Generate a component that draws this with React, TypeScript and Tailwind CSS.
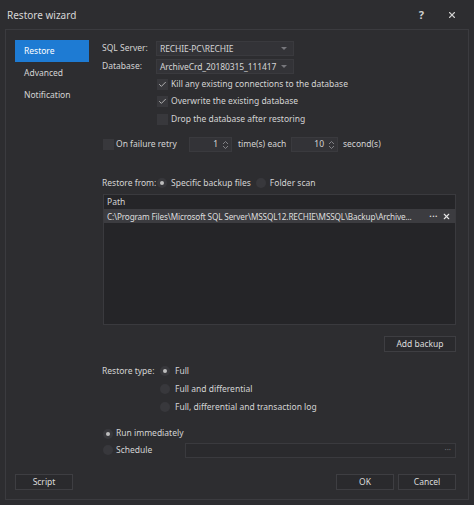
import { Check, X } from "lucide-react";

const font = { fontFamily: '"Noto Sans", "Segoe UI", sans-serif' };

const Select = ({ value }: { value: string }) => (
  <div className="w-[138px] h-[15px] bg-[#333337] border border-[#3a3a3e] flex items-center pl-[3px] pr-[6px]">
    <span className="flex-1 min-w-0 leading-[13px] tracking-[-0.1px]">{value}</span>
    <svg width="6" height="4" viewBox="0 0 6 4"><path d="M0 0h6L3 3z" fill="#77777c" /></svg>
  </div>
);

const Box = ({ checked }: { checked?: boolean }) => (
  <div className="w-[11px] h-[11px] bg-[#38383c] flex items-center justify-center shrink-0">
    {checked && <Check className="w-[9px] h-[9px] text-[#c8c8c8]" strokeWidth={2.2} />}
  </div>
);

const Radio = ({ on }: { on?: boolean }) => (
  <div className="w-[10px] h-[10px] rounded-full bg-[#38383c] flex items-center justify-center shrink-0">
    {on && <div className="w-[4px] h-[4px] rounded-full bg-[#bdbdbd]" />}
  </div>
);

const Spin = ({ value, w }: { value: string; w: string }) => (
  <div className={`${w} h-[15px] bg-[#333337] border border-[#3a3a3e] flex items-center justify-end pr-[3px] gap-[5px] shrink-0`}>
    <span>{value}</span>
    <div className="flex flex-col gap-[2px]">
      <svg width="5" height="3" viewBox="0 0 5 3"><path d="M0 3L2.5 0.5L5 3" fill="none" stroke="#8a8a8f" strokeWidth="0.9" /></svg>
      <svg width="5" height="3" viewBox="0 0 5 3"><path d="M0 0L2.5 2.5L5 0" fill="none" stroke="#8a8a8f" strokeWidth="0.9" /></svg>
    </div>
  </div>
);

const Button = ({ label, w }: { label: string; w: string }) => (
  <div className={`${w} h-[16px] bg-[#2a2a2d] border border-[#3e3e42] flex items-center justify-center text-[#dcdcdc] shrink-0`}>
    {label}
  </div>
);

export default function App() {
  return (
    <div className="w-[474px] h-[505px] bg-[#2d2d30] text-[#d4d4d4] text-[8.5px] leading-none whitespace-nowrap flex flex-col" style={font}>
      {/* title bar */}
      <div className="h-[29px] flex items-center pl-[7px] pr-[17px] shrink-0">
        <span className="flex-1 text-[10px] text-[#d6d6d6]">Restore wizard</span>
        <span className="text-[11px] font-bold text-[#d0d0d0] mr-[23px]">?</span>
        <X className="w-[10px] h-[10px] text-[#d0d0d0]" strokeWidth={2.6} />
      </div>

      <div className="mx-[5px] mb-[5px] flex-1 border border-[#3b3b3f] flex flex-col pt-[10px] pl-[9px] pr-[12px] pb-[9px] min-h-0">
        <div className="flex flex-1 min-w-0">
          {/* nav */}
          <div className="w-[74px] flex flex-col shrink-0">
            <div className="h-[22px] bg-[#1e7bd3] text-white flex items-center pl-[9px]">Restore</div>
            <div className="h-[22px] flex items-center pl-[9px]">Advanced</div>
            <div className="h-[22px] flex items-center pl-[9px]">Notification</div>
          </div>

          {/* form */}
          <div className="flex-1 min-w-0 ml-[13px] flex flex-col">
            <div className="mt-[1px] h-[15px] flex items-center">
              <span className="w-[54px]">SQL Server:</span>
              <Select value="RECHIE-PC\RECHIE" />
            </div>
            <div className="mt-[3px] h-[15px] flex items-center">
              <span className="w-[54px]">Database:</span>
              <Select value="ArchiveCrd_20180315_111417" />
            </div>
            <div className="mt-[2px] pl-[55px] flex flex-col">
              <div className="h-[17px] flex items-center gap-[3px]"><Box checked />Kill any existing connections to the database</div>
              <div className="h-[17px] flex items-center gap-[3px]"><Box checked />Overwrite the existing database</div>
              <div className="h-[18px] flex items-center gap-[3px]"><Box />Drop the database after restoring</div>
            </div>

            <div className="mt-[9px] h-[15px] flex items-center">
              <div className="w-[87px] flex items-center gap-[2px] pl-[1px]"><Box />On failure retry</div>
              <Spin value="1" w="w-[43px]" />
              <span className="ml-[6px] w-[53px]">time(s) each</span>
              <Spin value="10" w="w-[47px]" />
              <span className="ml-[5px]">second(s)</span>
            </div>

            <div className="mt-[24px] h-[14px] flex items-center">
              <span className="w-[55px]">Restore from:</span>
              <Radio on />
              <span className="ml-[4px]">Specific backup files</span>
              <div className="ml-[5px]"><Radio /></div>
              <span className="ml-[4px]">Folder scan</span>
            </div>

            <div className="mt-[4px] ml-[1px] h-[131px] bg-[#252528] border border-[#3a3a3e] flex flex-col min-w-0">
              <div className="h-[14px] flex items-center pl-[3px]">Path</div>
              <div className="h-[14px] bg-[#3c3c40] flex items-center pl-[3px] pr-[4px] text-[#dedede] min-w-0">
                <span className="flex-1 min-w-0 leading-[13px] text-[8.2px] tracking-[-0.15px]">C:\Program Files\Microsoft SQL Server\MSSQL12.RECHIE\MSSQL\Backup\Archive...</span>
                <span className="ml-[6px] font-bold tracking-[0.5px]">···</span>
                <X className="ml-[4px] w-[9px] h-[9px] text-[#e6e6e6] shrink-0" strokeWidth={3} />
              </div>
            </div>

            <div className="mt-[11px] flex justify-end">
              <Button label="Add backup" w="w-[72px]" />
            </div>

            <div className="mt-[10px] flex">
              <span className="w-[58px] h-[18px] flex items-center">Restore type:</span>
              <div className="flex flex-col">
                <div className="h-[18px] flex items-center gap-[5px]"><Radio on />Full</div>
                <div className="h-[18px] flex items-center gap-[5px]"><Radio />Full and differential</div>
                <div className="h-[18px] flex items-center gap-[5px]"><Radio />Full, differential and transaction log</div>
              </div>
            </div>

            <div className="mt-[9px] h-[17px] flex items-center gap-[3px] pl-[1px]"><Radio on />Run immediately</div>
            <div className="h-[16px] flex items-center pl-[1px]">
              <div className="w-[82px] flex items-center gap-[3px]"><Radio />Schedule</div>
              <div className="flex-1 h-[15px] bg-[#2a2a2d] border border-[#3a3a3e] flex items-center justify-end pr-[4px] text-[#6e6e72] text-[8px]">···</div>
            </div>
          </div>
        </div>

        {/* footer buttons */}
        <div className="flex items-center shrink-0">
          <Button label="Script" w="w-[58px]" />
          <div className="flex-1" />
          <Button label="OK" w="w-[58px]" />
          <div className="ml-[4px]"><Button label="Cancel" w="w-[58px]" /></div>
        </div>
      </div>
    </div>
  );
}
